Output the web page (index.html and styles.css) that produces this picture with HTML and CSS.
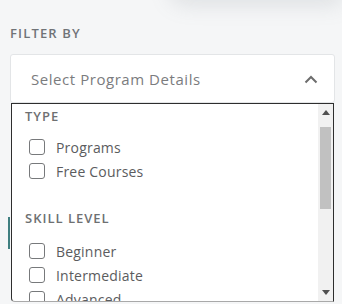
FILE: index.html
```html
<!DOCTYPE html>
<html>
<head>
<meta charset="utf-8">
<link rel="stylesheet" href="styles.css">
</head>
<body>
<div class="page">
  <div class="top-shadow"></div>
  <div class="filter">
    <div class="filter-title">FILTER BY</div>
    <div class="select-wrap">
      <div class="select">
        <span class="select-text">Select Program Details</span>
        <svg class="chevron" width="14" height="9" viewBox="0 0 14 9"><path d="M1.5 7.5 L7 2 L12.5 7.5" fill="none" stroke="#6d6d6d" stroke-width="2"/></svg>
      </div>
      <div class="below"></div>
      <div class="panel">
        <div class="panel-content">
          <div class="group">
            <div class="group-title">TYPE</div>
            <label class="opt"><span class="box"></span>Programs</label>
            <label class="opt"><span class="box"></span>Free Courses</label>
          </div>
          <div class="group group-skill">
            <div class="group-title">SKILL LEVEL</div>
            <label class="opt"><span class="box"></span>Beginner</label>
            <label class="opt"><span class="box"></span>Intermediate</label>
            <label class="opt"><span class="box"></span>Advanced</label>
          </div>
        </div>
        <div class="scrollbar">
          <div class="sb-btn"><svg width="8" height="5" viewBox="0 0 8 5"><path d="M0 5 L4 0 L8 5 Z" fill="#505050"/></svg></div>
          <div class="sb-track"><div class="sb-thumb"></div></div>
          <div class="sb-btn sb-btn-down"><svg width="8" height="5" viewBox="0 0 8 5"><path d="M0 0 L8 0 L4 5 Z" fill="#505050"/></svg></div>
        </div>
      </div>
    </div>
  </div>
</div>
</body>
</html>
```
FILE: styles.css
```css
html, body {
  margin: 0;
  padding: 0;
}
body {
  background: #f5f6f7;
  font-family: "Open Sans", "Liberation Sans", sans-serif;
  width: 342px;
  height: 304px;
  overflow: hidden;
}
.page {
  position: relative;
  height: 304px;
  overflow: hidden;
}
.top-shadow {
  position: absolute;
  left: 170px;
  right: 0;
  top: -30px;
  height: 30px;
  box-shadow: 0 4px 22px rgba(120, 130, 140, 0.2);
  border-radius: 20px 0 0 20px;
  background: #eef0f1;
}
.filter {
  padding: 24px 7px 0 10px;
}
.filter-title {
  font-size: 13px;
  line-height: 18px;
  font-weight: 600;
  letter-spacing: 1.15px;
  color: #707377;
  margin-bottom: 12px;
}
.select-wrap {
  position: relative;
}
.select {
  height: 47px;
  background: #fff;
  border: 1px solid #e3e5e7;
  border-radius: 3px;
  display: flex;
  align-items: center;
  justify-content: space-between;
  padding: 0 16px 0 20px;
}
.select-text {
  font-size: 15px;
  color: #7b7c7e;
  letter-spacing: 0.55px;
  margin-top: 1px;
}
.chevron {
  display: block;
  margin-top: 2px;
}
.below {
  width: 2px;
  height: 32px;
  background: #3f7f80;
  margin: 114px 0 0 -2px;
}
.panel {
  position: absolute;
  left: 1px;
  top: 49px;
  width: 321px;
  height: 197px;
  background: #fff;
  border: 1px solid #2e2e2e;
  border-bottom-color: #a9a9a9;
  border-radius: 0 0 0 4px;
  display: flex;
  overflow: hidden;
}
.panel-content {
  flex: 1;
  padding: 3px 0 0 13px;
  overflow: hidden;
}
.group-title {
  font-size: 13px;
  line-height: 18px;
  font-weight: 600;
  letter-spacing: 1px;
  color: #6e7072;
  margin-bottom: 10px;
}
.group-skill {
  margin-top: 26px;
}
.group-skill .group-title {
  margin-bottom: 12px;
}
.opt {
  display: flex;
  align-items: center;
  height: 24px;
  font-size: 14px;
  color: #5b5c5e;
  letter-spacing: 0.2px;
  padding-left: 4px;
}
.box {
  width: 14px;
  height: 14px;
  border: 1px solid #77797b;
  border-radius: 3px;
  box-sizing: content-box;
  margin-right: 11px;
  background: #fff;
}
.scrollbar {
  width: 15px;
  background: #f1f1f1;
  display: flex;
  flex-direction: column;
}
.sb-btn {
  height: 17px;
  display: flex;
  align-items: center;
  justify-content: center;
}
.sb-btn-down {
  height: 18px;
}
.sb-track {
  flex: 1;
  padding: 6px 2px 0 2px;
}
.sb-thumb {
  height: 82px;
  background: #c1c1c1;
}
```
